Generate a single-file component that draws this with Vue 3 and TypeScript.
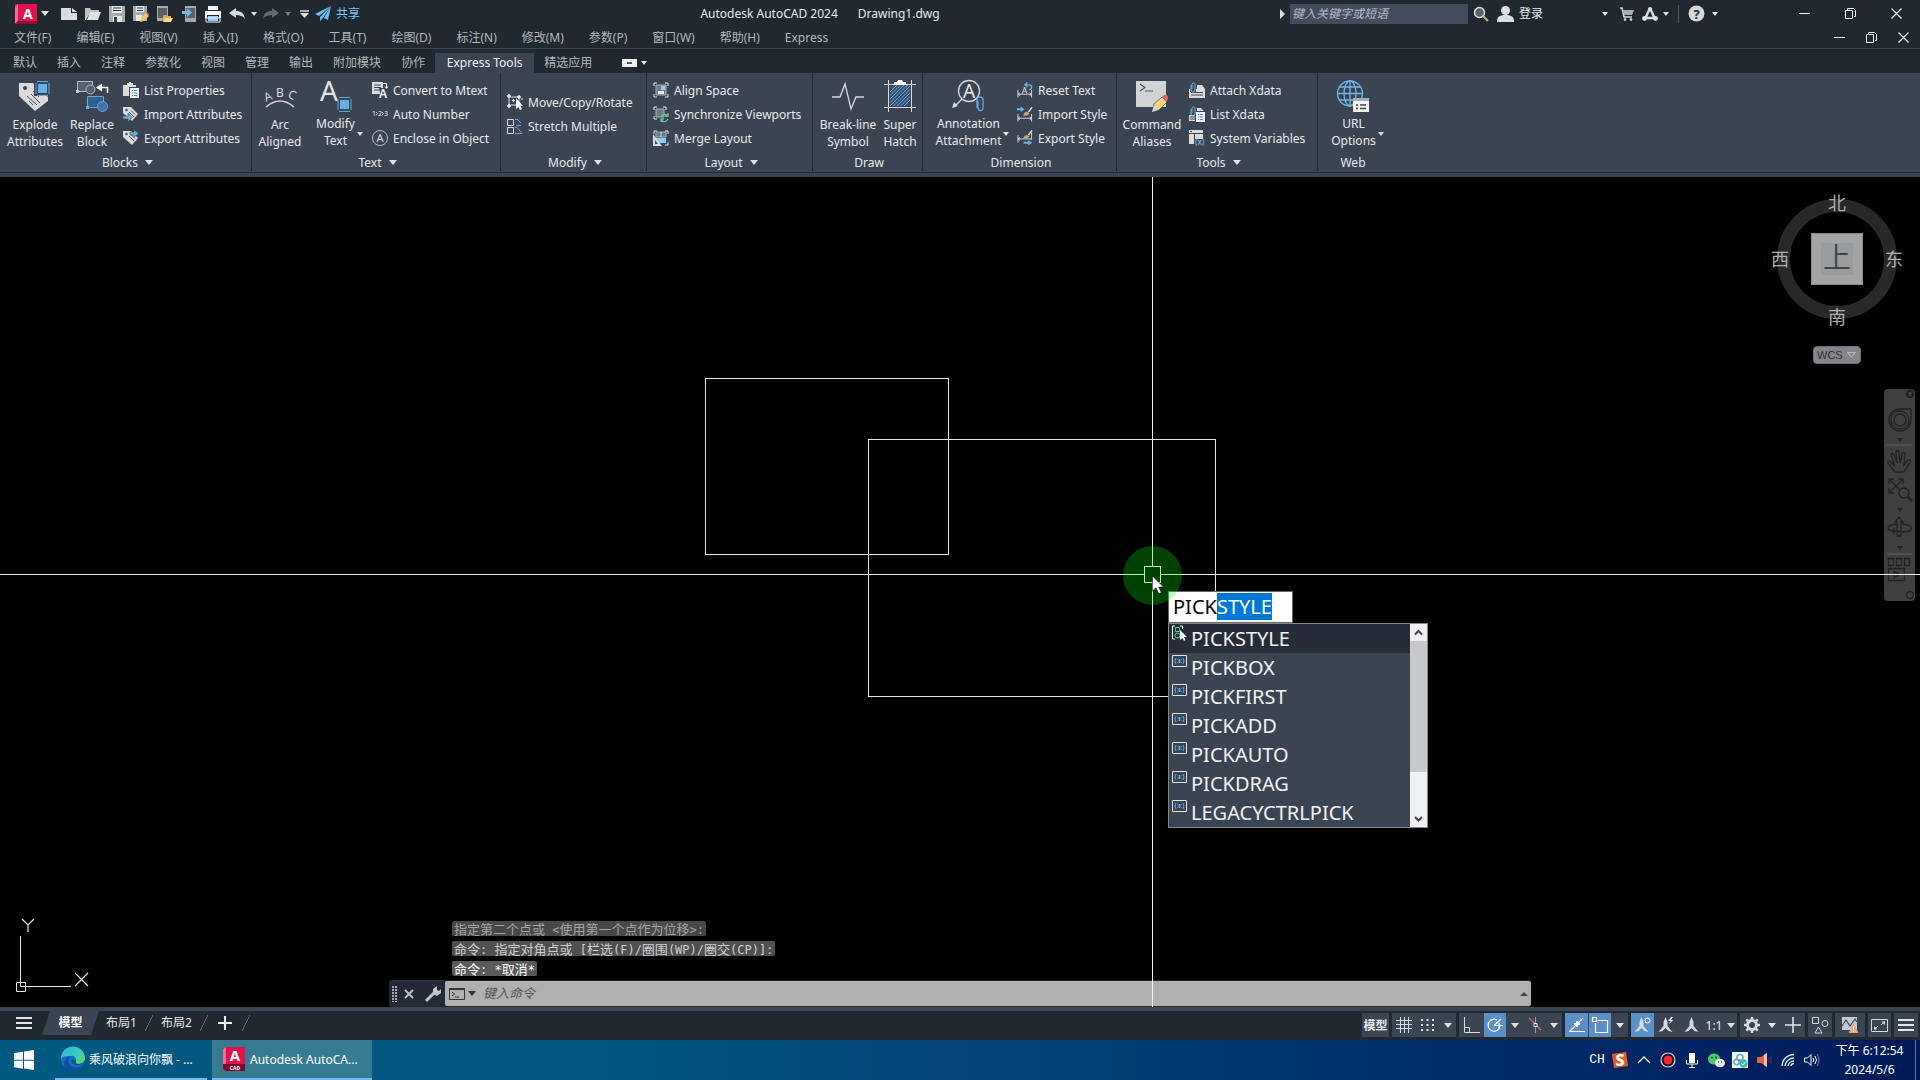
<script setup lang="ts">
import { onMounted, ref } from 'vue'

interface Icon { w: number; h: number; body: string }

const tag = '<path d="M0 1h8l7 7-6 7-9-8z" fill="#dcdcdc"/><circle cx="3.500" cy="4" r="1.200" fill="#3b4453"/><path d="M6 6l5 5M8 4.500l4 4" stroke="#3b4453"/>'
const dimension = '<path d="M1 8v8M15.500 8v8M1 12.500h14M3 11l-2 1.500 2 1.500M13.500 11l2 1.500-2 1.500" stroke="#d6d8da" fill="none"/>'
const brackets = '<path d="M1 4V1h3M12 1h3v3M15 12v3h-3M4 15H1v-3" stroke="#e4e6e8" fill="none"/>'
const clip = '<path d="M2 3v5a2 2 0 0 0 4 0V2.500a1.500 1.500 0 0 0-3 0V7" stroke="#6fb7ea" fill="none"/>'
const blueSquare = (x: number, y: number) =>
  `<g transform="translate(${x} ${y})"><path d="M3 3h9v9H3z" fill="#64b1ea"/><path d="M1 2v11M14 2v11M2 .5h11M2 14.500h11" stroke="#64a9dc" fill="none"/></g>`
const compass = '<path d="M7.500 0l2 5v4l5 6-4-1-3-3-3 3-4 1 5-6V5z" fill="#d5dae0"/>'

const icons: Record<string, Icon> = {
  logo: { w: 23, h: 20, body: '<path d="M0 0h22v19H0z" fill="#e0134f"/><path d="M0 3l3-3v17l-3 3z" fill="#f2708f"/><path d="M0 20l3-3h19v3z" fill="#8f0f33"/><text x="8" y="14.500" font-size="14" font-weight="700" fill="#fff">A</text>' },
  new: { w: 16, h: 14, body: '<path d="M0 1h10v5h6v7H0z" fill="#dcdcdc"/><path d="M11 1l5 4h-5z" fill="#dcdcdc"/>' },
  open: { w: 16, h: 14, body: '<path d="M0 1h5l1 2h8v3H5l-4 7H0z" fill="#bfc0c2"/><path d="M5 5h11l-3 8H2z" fill="#e2e2e2"/>' },
  save: { w: 16, h: 16, body: '<path d="M0 0h16v16H0z" fill="#a9abad"/><path d="M3 0h10v7H3z" fill="#e8e8e8"/><path d="M4 2h8M4 4.500h8" stroke="#333b44"/><path d="M4 10h9v6H4z" fill="#e8e8e8"/><path d="M5 11h3v5H5z" fill="#333b44"/>' },
  saveas: { w: 16, h: 16, body: '<path d="M0 0h14v15H0z" fill="#a9abad"/><path d="M3 0h8v6H3z" fill="#e8e8e8"/><path d="M4 2h6M4 4.500h6" stroke="#333b44"/><path d="M3 9h6v6H3z" fill="#e8e8e8"/><path d="M7 16l1-4 5-5 3 3-5 5z" fill="#f3c46a"/><path d="M13 7l1-1 2 2v2z" fill="#df6464"/>' },
  mobopen: { w: 16, h: 16, body: '<path d="M0 0h11v15H0z" fill="#a9a9a9"/><path d="M1 2h9v10H1z" fill="#5d6165"/><path d="M6 9h4l1 1h3v5H6z" fill="#dba74f"/><path d="M8 12h8l-2 4H6z" fill="#fbd88b"/>' },
  mobsave: { w: 16, h: 16, body: '<path d="M4 0h11v16H4z" fill="#a9a9a9"/><path d="M5 2h9v10H5z" fill="#5d6165"/><path d="M1 5h5V2l5 4.500L6 11V8H1z" fill="#6dbdf2"/>' },
  print: { w: 16, h: 16, body: '<path d="M3 0h10v4H3zM0 5h16v7h-2v-3H2v3H0z" fill="#f4f4f4"/><path d="M3 10h10v5H3z" fill="#8fcdf5"/><path d="M1 12h14v4H1z" fill="none" stroke="#f4f4f4"/>' },
  undo: { w: 16, h: 12, body: '<path d="M0 5l7-5v3c5 0 8 2 9 8-2-3-5-4-9-4v3z" fill="#d9d9d9"/>' },
  redo: { w: 16, h: 12, body: '<path d="M16 5L9 0v3c-5 0-8 2-9 8 2-3 5-4 9-4v3z" fill="#646a70"/>' },
  custom: { w: 9, h: 8, body: '<path d="M0 1h9" stroke="#e0e0e0" stroke-width="1.500"/><path d="M0 3h9L4.500 8z" fill="#e0e0e0"/>' },
  plane: { w: 16, h: 15, body: '<path d="M16 0L0 8l4 2zM16 0L5 11v4l3-3zM16 0L9 12l4 2z" fill="#6dbdf2"/>' },
  magnifier: { w: 16, h: 16, body: '<circle cx="6.500" cy="6.500" r="5" fill="#58616c" stroke="#e0e0e0" stroke-width="1.500"/><path d="M10 10l5 5" stroke="#cfb08a" stroke-width="2"/>' },
  user: { w: 17, h: 16, body: '<circle cx="8.500" cy="4.500" r="4.500" fill="#dedede"/><path d="M0 16c0-5 2-6 6-7h5c4 1 6 2 6 7z" fill="#dedede"/>' },
  cart: { w: 14, h: 14, body: '<path d="M0 1h2l2 9h8" stroke="#d8d8d8" fill="none" stroke-width="1.500"/><path d="M3 3h11l-2 5H4z" fill="#a9adb1"/><circle cx="5" cy="12.500" r="1.300" fill="#e0e0e0"/><circle cx="11" cy="12.500" r="1.300" fill="#e0e0e0"/>' },
  autodesk: { w: 16, h: 14, body: '<path d="M8 1L3 12M8 1l5 11M3 11h10" stroke="#dedede" stroke-width="2.400" fill="none"/><circle cx="8" cy="2" r="2" fill="#dedede"/><circle cx="2.500" cy="11.500" r="2.400" fill="#dedede"/><circle cx="13.500" cy="11.500" r="2.400" fill="#dedede"/>' },
  help: { w: 17, h: 17, body: '<circle cx="8.500" cy="8.500" r="8" fill="#d8d8d8"/><text x="8.500" y="13.500" font-size="13" font-weight="700" text-anchor="middle" fill="#202830">?</text>' },
  min: { w: 11, h: 11, body: '<path d="M0 5.500h11" stroke="#f2f2f2"/>' },
  restore: { w: 11, h: 11, body: '<path d="M.5 2.500h7v8h-7zM2.500 2V.5h6l2 2v6H9" stroke="#f2f2f2" fill="none"/>' },
  close: { w: 11, h: 11, body: '<path d="M.5.5l10 10M10.500.5l-10 10" stroke="#f2f2f2" stroke-width="1.200"/>' },

  explode: { w: 32, h: 32, body: `<path d="M0 3h14l15 14v4L16 31 0 16z" fill="#dadada"/><circle cx="6" cy="8" r="2" fill="#3b4453"/><path d="M8 16l10 9M12 14l9 9M10 21l4 4M14 11l6 6" stroke="#4a525f" fill="none"/><path d="M15 0h17v16H15z" fill="#3b4453"/>${blueSquare(16, 1)}` },
  replace: { w: 32, h: 32, body: '<path d="M1.500 1.500h15v10h-15z" fill="#566070" stroke="#b9bec5"/><circle cx="14.500" cy="9.500" r="4.500" fill="#566070" stroke="#b9bec5"/><path d="M0 10h3v3H0z" fill="#c9ced4"/><path d="M31.500 13V7.500H23" stroke="#fff" fill="none" stroke-width="1.500"/><path d="M20 7.500l6-4v8z" fill="#fff"/><path d="M11.500 16.500h16v11h-16z" fill="#315f8a" stroke="#64a9dc"/><circle cx="26.500" cy="26.500" r="5" fill="#3f76a8" stroke="#64a9dc"/><path d="M10 26h3v3h-3z" fill="#64b1ea"/>' },
  listprop: { w: 16, h: 16, body: '<path d="M0 3h4V1h2V0h2v1h2v2h3v2H6v9H0z" fill="#dcdcdc"/><path d="M7 6h9v10H7z" fill="#f2f2f2"/><path d="M9 8.500h1M9 11h1M9 13.500h1M11 8.500h3M11 11h3M11 13.500h3" stroke="#3f8fcf"/>' },
  importattr: { w: 16, h: 16, body: `${tag}<path d="M0 10h5V7l4 4.500L5 16v-3H0z" fill="#64b1ea" stroke="#3b4453" stroke-width=".6"/>` },
  exportattr: { w: 16, h: 16, body: `${tag}<path d="M7 2h4V0l5 3.500L11 7V5H7z" fill="#64b1ea" stroke="#3b4453" stroke-width=".6"/>` },
  arc: { w: 32, h: 32, body: '<text transform="translate(2 22) rotate(-24)" font-size="12" fill="#d6d8da">A</text><text x="12" y="17" font-size="12" fill="#d6d8da">B</text><text transform="translate(23 17) rotate(26)" font-size="12" fill="#d6d8da">C</text><path d="M2 27q14-12 28 0" stroke="#d6d8da" fill="none" stroke-width="1.400"/>' },
  modtext: { w: 32, h: 32, body: `<text x="0" y="21" font-size="28" fill="#dfe1e3">A</text>${blueSquare(17, 17)}` },
  mtext: { w: 16, h: 16, body: '<path d="M0 0h11v12H0z" fill="#dcdcdc"/><path d="M2 3h7M2 5.500h7M2 8h5" stroke="#3b4453"/><path d="M7 6h9v10H9z" fill="#3b4453"/><text x="7" y="16" font-size="12" font-weight="600" fill="#f2f2f2">A</text><path d="M11 1.500h3.500V6M13 4.500l1.500 2 1.500-2" stroke="#f2f2f2" fill="none"/>' },
  autonum: { w: 16, h: 16, body: '<text x="0" y="10" font-size="7" fill="#f2f2f2">1</text><text x="6" y="10" font-size="7" fill="#f2f2f2">2</text><text x="12" y="10" font-size="7" fill="#f2f2f2">3</text><path d="M4 6l1.500 1.500L4 9M10 6l1.500 1.500L10 9" stroke="#f2f2f2" fill="none" stroke-width=".8"/>' },
  enclose: { w: 16, h: 16, body: '<circle cx="8" cy="8" r="7.500" stroke="#b9bec5" fill="none"/><text x="8" y="12" font-size="11" text-anchor="middle" fill="#dcdcdc">A</text>' },
  movecopy: { w: 16, h: 16, body: '<path d="M2 3h10v8H2z" fill="none" stroke="#dcdcdc"/><path d="M0 2h4M0 12h4M2 0v4M2 10v4M10 3h4M12 1v4" stroke="#f2f2f2" stroke-width="1.500"/><path d="M5 6.500h3M6.500 5v3M14 5h2" stroke="#f2f2f2"/><path d="M9 4v11l2.500-2 1.500 3 2-1-1.500-3H16z" fill="#fff"/>' },
  stretch: { w: 16, h: 16, body: '<path d="M.5 1.500h6v6h-6zM.5 9.500h6v6h-6z" stroke="#dcdcdc" fill="none"/><path d="M8 1.500h3l3 4M14 7.500H9M8 9.500h2l5 6H8" stroke="#64a9dc" fill="none"/>' },
  align: { w: 16, h: 16, body: `${brackets}<path d="M3 3h10v10H3z" fill="#6f7885" stroke="#aab0b8"/><path d="M8 4h4v4H8z" fill="#8fcdf5"/><path d="M5 9h6v3H5z" fill="#eef0f2"/>` },
  sync: { w: 16, h: 16, body: '<path d="M1 4V1h3M10 1h3v3M4 13H1v-3" stroke="#e4e6e8" fill="none"/><path d="M3 3h8v8H3z" fill="#6f7885" stroke="#aab0b8"/><path d="M8 11a4 4 0 0 1 7-1M15 13a4 4 0 0 1-7 1M15 7v3h-3M8 16v-3h3" stroke="#5fd09a" fill="none" stroke-width="1.300"/>' },
  merge: { w: 16, h: 16, body: `${brackets}<path d="M3 2h10v5H3z" fill="#6f7885" stroke="#aab0b8"/><path d="M3 8h10v5H3z" fill="#8fcdf5"/><path d="M8 2v5" stroke="#dcdcdc"/><path d="M0 4l9 12H0z" fill="#dcdcdc"/><path d="M2 10l3 4H2z" fill="#3b4453"/>` },
  breakline: { w: 32, h: 32, body: '<path d="M0 17h8l5-13 6 25 5-12h8" stroke="#d6d8da" fill="none" stroke-width="1.300"/>' },
  hatch: { w: 32, h: 32, body: '<path d="M6 5h20v21H6z" fill="#35506e"/><path d="M6 12l7-7M6 19L20 5M6 26L26 6M13 26l13-13M20 26l6-6M6 15.500L16.500 5M6 22.500L23.500 5M9.500 26L26 9.500M16.500 26l9.500-9.500" stroke="#64a9dc"/><path d="M4.500 0v32M27.500 0v32M0 4.500h32M0 27.500h32" stroke="#d6d8da"/><path d="M10 2h3l1-2h4l1 2h3v3H10z" fill="#fff"/>' },
  annot: { w: 32, h: 32, body: '<circle cx="17" cy="11" r="10.500" stroke="#d6d8da" fill="none" stroke-width="1.300"/><text x="17" y="18" font-size="19" text-anchor="middle" fill="#e8eaec">A</text><path d="M10 19L2 27" stroke="#d6d8da" stroke-width="1.300"/><path d="M0 28l2-6 4 4z" fill="#d6d8da"/><path d="M26 21v7a2.500 2.500 0 0 0 5 0v-8a3 3 0 0 0-6 0v8" stroke="#64a9dc" fill="none" stroke-width="1.300"/>' },
  reset: { w: 17, h: 16, body: `${dimension}<text x="8" y="12" font-size="10" text-anchor="middle" fill="#dcdcdc">A</text><path d="M9 2.500h4a2.500 2.500 0 0 1 0 5M11 0L8.500 2.500 11 5" stroke="#6fb7ea" fill="none" stroke-width="1.400"/>` },
  impstyle: { w: 17, h: 16, body: `${dimension}<path d="M0 2h4V0l4 3-4 3V4H0z" fill="#64b1ea"/><path d="M7 10c0-4 2-4 4-4l2 1c-1 3-3 3-6 3z" fill="#c9a27a"/><path d="M12 6l4-5" stroke="#eee" stroke-width="1.500"/>` },
  expstyle: { w: 17, h: 16, body: `<path d="M1 5v8M15.500 2v8M1 9h14M3 7.500L1 9l2 1.500" stroke="#d6d8da" fill="none"/><path d="M7 9c0-4 2-4 4-4l2 1c-1 3-3 3-6 3z" fill="#c9a27a"/><path d="M12 5l4-5" stroke="#eee" stroke-width="1.500"/><path d="M7 12h5v-2l4 3-4 3v-2H7z" fill="#64b1ea"/>` },
  cmdalias: { w: 32, h: 32, body: '<path d="M0 1h30v26H0z" fill="#d2d3d4"/><path d="M4 4l5 3.500L4 11M9 11h8" stroke="#4a525f" fill="none" stroke-width="1.200"/><path d="M16 32l2-8 8-7 5 5-8 8z" fill="#f8d27c" stroke="#3b4453" stroke-width=".7"/><path d="M26 17l2-2h3l1 2v2l-2 3z" fill="#df6464"/><path d="M16 32l2-7 4 5z" fill="#d6d6d6"/>' },
  attachx: { w: 16, h: 16, body: `<path d="M0 7h16v9H0z" fill="#dcdcdc"/><path d="M8 3h5l3 4H8z" fill="#dcdcdc"/><path d="M2 10.500h12M2 13h12" stroke="#3b4453"/><path d="M1 0h6v10H1z" fill="#3b4453"/>${clip}` },
  listx: { w: 16, h: 16, body: `<path d="M0 9h6v6H0zM8 2h4l3 3H8z" fill="#dcdcdc"/><path d="M1 11h5M1 13h5" stroke="#3b4453"/>${clip}<path d="M7 6h9v10H7z" fill="#f2f2f2"/><path d="M9 8.500h1M9 11h1M9 13.500h1M11 8.500h3M11 11h3M11 13.500h3" stroke="#3f8fcf"/>` },
  sysvar: { w: 16, h: 16, body: '<path d="M0 0h14v3H0zM0 4h5v10H0zM6 4h8v5H6z" fill="#dcdcdc"/><path d="M1 1.500h2" stroke="#3b4453"/><text x="6" y="15" font-size="8" fill="#8fcdf5">(x)</text>' },
  url: { w: 32, h: 32, body: '<g stroke="#6fb7ea" fill="none" stroke-width="1.300"><circle cx="13" cy="13.500" r="12.500"/><ellipse cx="13" cy="13.500" rx="6" ry="12.500"/><path d="M13 1v25M.5 13.500h25M2 7h22M2 20h22"/></g><path d="M16 18h16v14H16z" fill="#f2f2f2"/><path d="M16 18h16v3H16z" fill="#a9adb3"/><path d="M19 25h2M19 28.500h2M23 25h6M23 28.500h6" stroke="#3b4453" stroke-width="1.500"/>' },

  cursorlist: { w: 16, h: 16, body: '<path d="M3 1H.5v13H3M8 1h2.500v3" stroke="#fff" fill="none"/><path d="M3.500 2.500h4v4h-4z" stroke="#5fd09a" fill="none"/><circle cx="5.500" cy="10.500" r="2.500" stroke="#5fd09a" fill="none"/><path d="M8 5v10l2.500-2 1.500 3 1.500-1-1.500-3h3z" fill="#fff"/>' },
  variable: { w: 16, h: 16, body: '<path d="M.5 1.500h14v11H.5z" stroke="#dfe3e8" fill="none"/><path d="M4 4q-2 3 0 6M11 4q2 3 0 6M5.500 5l4 4M9.500 5l-4 4M7.500 5v4" stroke="#64a9dc" fill="none"/>' },

  wrench: { w: 16, h: 16, body: '<path d="M1 15L9 7" stroke="#c2c6cb" stroke-width="3"/><path d="M8 3l4-3v4l2 1 2-2v4l-4 3-4-2z" fill="#c2c6cb"/>' },
  prompt: { w: 16, h: 12, body: '<path d="M.5.5h15v11H.5z" stroke="#333" fill="none"/><path d="M0 0h16v2H0z" fill="#333"/><path d="M3 4l2.500 2L3 8M6 9h4" stroke="#333" fill="none"/>' },
  x: { w: 10, h: 10, body: '<path d="M1 1l8 8M9 1L1 9" stroke="#c2c6cb" stroke-width="1.800"/>' },

  menu: { w: 16, h: 14, body: '<path d="M0 2h16M0 7h16M0 12h16" stroke="#e4e6e8" stroke-width="2"/>' },
  plus: { w: 16, h: 16, body: '<path d="M8 0v16M0 8h16" stroke="#dfe3e8" stroke-width="1.600"/>' },
  grid: { w: 16, h: 16, body: '<path d="M4.500 0v16M8.500 0v16M12.500 0v16M0 3.500h16M0 7.500h16M0 11.500h16" stroke="#d5dae0"/>' },
  dots: { w: 14, h: 14, body: '<path d="M0 2h14M0 7h14M0 12h14" stroke="#e4e6e8" stroke-width="2" stroke-dasharray="2 3.500"/>' },
  ortho: { w: 16, h: 16, body: '<path d="M.5 0v15.500H16M.5 10.500h5v5" stroke="#d5dae0" fill="none"/>' },
  polar: { w: 16, h: 16, body: '<path d="M13 9a6 6 0 1 1-3-6M7 8.500h9M7 8.500L14 2M12 6v5" stroke="#fff" fill="none" stroke-width="1.200"/>' },
  iso: { w: 14, h: 16, body: '<path d="M1 1l12 12" stroke="#e0647c" stroke-width="1.300"/><path d="M7.500 0v16" stroke="#5fbf8a"/><path d="M6 6.500h3v3H6z" stroke="#eee" fill="#3b4453"/>' },
  track: { w: 16, h: 16, body: '<path d="M0 14.500h16M1 14L14 1" stroke="#fff" fill="none" stroke-width="1.200"/><path d="M5 6h6v2H5zM7 4h2v6H7z" fill="#fff"/>' },
  osnap: { w: 16, h: 16, body: '<path d="M6 3.500h9.500v12h-12V6M.5.5h4v4h-4z" stroke="#fff" fill="none" stroke-width="1.200"/>' },
  anno1: { w: 17, h: 16, body: `${compass}<circle cx="13.500" cy="3.500" r="2.500" stroke="#fff" fill="#5a8fc8"/>` },
  anno2: { w: 17, h: 16, body: `${compass}<path d="M13 0l-3 4h2.500l-2 3.500 5-4.500H13L15 0z" fill="#d5dae0"/>` },
  anno3: { w: 15, h: 16, body: compass },
  gear: { w: 16, h: 16, body: '<circle cx="8" cy="8" r="4.500" stroke="#d5dae0" fill="none" stroke-width="3"/><path d="M8 0v3M8 13v3M0 8h3M13 8h3M2.300 2.300l2 2M11.700 11.700l2 2M2.300 13.700l2-2M11.700 4.300l2-2" stroke="#d5dae0" stroke-width="2.500"/>' },
  isolate: { w: 17, h: 17, body: '<path d="M.5.5h6v6h-6zM6.500 10l3.500 6H3z" stroke="#d5dae0" fill="none"/><circle cx="13" cy="6.500" r="3" stroke="#d5dae0" fill="none"/>' },
  perf: { w: 17, h: 17, body: '<path d="M0 0h15v13H0z" fill="#c4c8cd"/><path d="M0 9L4 3l4 6 5-7 2 3" stroke="#3b4453" fill="none" stroke-width="1.200"/><path d="M11.500 6l5 10h-10z" fill="#f0a878"/><path d="M11.500 9v4M11.500 14v1" stroke="#fff"/>' },
  clean: { w: 17, h: 13, body: '<path d="M.5.5h16v12H.5z" stroke="#d5dae0" fill="none"/><path d="M3 7v3.500h3.500zM14 6V2.500h-3.500z" fill="#d5dae0"/><path d="M3.500 10L7 7M10 6l4-3.500" stroke="#d5dae0"/>' },

  windows: { w: 20, h: 20, body: '<path d="M0 3l9-1.300v8H0zM10 1.500L20 0v9.700H10zM0 10.700h9v8L0 17.300zM10 10.700h10V20l-10-1.500z" fill="#fff"/>' },
  edge: { w: 24, h: 24, body: '<defs><linearGradient id="eg" x1="0" y1="0" x2="1" y2="1"><stop offset="0" stop-color="#2fb4e6"/><stop offset=".5" stop-color="#3bc9c4"/><stop offset="1" stop-color="#62d957"/></linearGradient></defs><circle cx="12" cy="12" r="12" fill="#1271c9"/><path d="M0 12A12 12 0 0 1 24 11c0 5-4 6-7 6-2 0-3-1-2-3 1-4-3-6-6-5C5 9 1 9 0 12z" fill="url(#eg)"/><path d="M10 9c-4 2-3 9 2 11 4 1 7 0 10-2-3 7-12 8-17 4C1 18 3 10 10 9z" fill="#0f4f9e"/><path d="M11 12c-2 4 2 8 11 5l2 1V13c-1 3-4 4-7 4-2 0-3-1-2-3z" fill="#02597f"/>' },
  cad: { w: 22, h: 24, body: '<path d="M0 2l3-2h19v17H0z" fill="#e0134f"/><path d="M0 2l3-2v17H0z" fill="#f2708f"/><path d="M0 17h22v7H3l-3-2z" fill="#7b0c2b"/><text x="12" y="14" font-size="15" font-weight="700" text-anchor="middle" fill="#fff">A</text><text x="12" y="22.500" font-size="5" font-weight="700" text-anchor="middle" fill="#fff">CAD</text>' },
  sogou: { w: 18, h: 18, body: '<path d="M1 3l14-2 2 14-14 2z" fill="#e85a24"/><text x="9" y="15" font-size="16" font-weight="800" text-anchor="middle" fill="#fff">S</text>' },
  chevron: { w: 14, h: 8, body: '<path d="M1 7l6-6 6 6" stroke="#fff" fill="none" stroke-width="1.300"/>' },
  record: { w: 16, h: 16, body: '<circle cx="8" cy="8" r="7" fill="#101018" stroke="#dcdcdc" stroke-width="1.200"/><circle cx="8" cy="8" r="4.500" fill="#f02a2a"/>' },
  mic: { w: 12, h: 16, body: '<path d="M3 1h6v10H3z" fill="#fff"/><path d="M.5 8v4h11V8M6 12v3M3 15.500h6" stroke="#fff" fill="none"/>' },
  wechat: { w: 17, h: 15, body: '<ellipse cx="6" cy="6" rx="6" ry="5.500" fill="#4fc96b"/><circle cx="4" cy="4.500" r=".9" fill="#0b4a33"/><circle cx="8" cy="4.500" r=".9" fill="#0b4a33"/><ellipse cx="12" cy="10" rx="5" ry="4.300" fill="#e6f2e9"/><circle cx="10.500" cy="9" r=".7" fill="#456"/><circle cx="13.500" cy="9" r=".7" fill="#456"/>' },
  cloud: { w: 16, h: 16, body: '<path d="M0 0h16v16H0z" fill="#f4f8fa"/><circle cx="8" cy="5.500" r="3" stroke="#5aa6dd" fill="none" stroke-width="1.500"/><circle cx="4.500" cy="10" r="2.700" stroke="#5aa6dd" fill="none" stroke-width="1.500"/><circle cx="7.500" cy="8.500" r="1.200" fill="#e0697c"/><circle cx="11.500" cy="11.500" r="4.200" fill="#35c4ae"/><path d="M9.500 11.500l1.500 1.500 2.500-3" stroke="#fff" fill="none"/>' },
  speaker: { w: 15, h: 14, body: '<path d="M0 4h4l6-4v14l-6-4H0z" fill="#e0644a"/><path d="M7 2l3-2v14l-3-2z" fill="#f7c3ae"/><path d="M12 4v6M14 3v8" stroke="#6d2340"/>' },
  network: { w: 14, h: 14, body: '<g stroke="#e8eef6" fill="none" stroke-width="1.300"><path d="M1 13A12 12 0 0 1 13 1.500M4 13a9 9 0 0 1 9-8M7 13a6 6 0 0 1 6-5M10 13a3 3 0 0 1 3-2.500"/></g>' },
  sound: { w: 16, h: 14, body: '<path d="M.5 5h3L7 1.500v11L3.500 9h-3z" stroke="#fff" fill="none"/><path d="M9 5q1.500 2 0 4M11 3q3 4 0 8" stroke="#fff" fill="none"/><path d="M13 1q4 6 0 12" stroke="#7787ad" fill="none"/>' },
}

const box = (k: string) => `0 0 ${icons[k].w} ${icons[k].h}`

const files = ['new', 'open', 'save', 'saveas', 'mobopen', 'mobsave', 'print']
const menus = ['文件(F)', '编辑(E)', '视图(V)', '插入(I)', '格式(O)', '工具(T)', '绘图(D)', '标注(N)', '修改(M)', '参数(P)', '窗口(W)', '帮助(H)', 'Express']
const tabs = ['默认', '插入', '注释', '参数化', '视图', '管理', '输出', '附加模块', '协作', 'Express Tools', '精选应用']

interface Big { icon: string; lines: string[]; width: number; drop?: boolean }
interface Panel { title: string; width: number; drop?: boolean; big: Big[]; small: [string, string][] }
const panels: Panel[] = [
  { title: 'Blocks', width: 251, drop: true,
    big: [{ icon: 'explode', lines: ['Explode', 'Attributes'], width: 62 }, { icon: 'replace', lines: ['Replace', 'Block'], width: 52 }],
    small: [['listprop', 'List Properties'], ['importattr', 'Import Attributes'], ['exportattr', 'Export Attributes']] },
  { title: 'Text', width: 249, drop: true,
    big: [{ icon: 'arc', lines: ['Arc', 'Aligned'], width: 50 }, { icon: 'modtext', lines: ['Modify', 'Text'], width: 62, drop: true }],
    small: [['mtext', 'Convert to Mtext'], ['autonum', 'Auto Number'], ['enclose', 'Enclose in Object']] },
  { title: 'Modify', width: 146, drop: true, big: [],
    small: [['movecopy', 'Move/Copy/Rotate'], ['stretch', 'Stretch Multiple']] },
  { title: 'Layout', width: 166, drop: true, big: [],
    small: [['align', 'Align Space'], ['sync', 'Synchronize Viewports'], ['merge', 'Merge Layout']] },
  { title: 'Draw', width: 110,
    big: [{ icon: 'breakline', lines: ['Break-line', 'Symbol'], width: 64 }, { icon: 'hatch', lines: ['Super', 'Hatch'], width: 40 }], small: [] },
  { title: 'Dimension', width: 194,
    big: [{ icon: 'annot', lines: ['Annotation', 'Attachment'], width: 86, drop: true }],
    small: [['reset', 'Reset Text'], ['impstyle', 'Import Style'], ['expstyle', 'Export Style']] },
  { title: 'Tools', width: 201, drop: true,
    big: [{ icon: 'cmdalias', lines: ['Command', 'Aliases'], width: 64 }],
    small: [['attachx', 'Attach Xdata'], ['listx', 'List Xdata'], ['sysvar', 'System Variables']] },
  { title: 'Web', width: 67,
    big: [{ icon: 'url', lines: ['URL', 'Options'], width: 66, drop: true }], small: [] },
]

const suggestions = ['PICKSTYLE', 'PICKBOX', 'PICKFIRST', 'PICKADD', 'PICKAUTO', 'PICKDRAG', 'LEGACYCTRLPICK']

const history = ['指定第二个点或 <使用第一个点作为位移>:', '命令: 指定对角点或 [栏选(F)/圈围(WP)/圈交(CP)]:', '命令: *取消*']
const runs = (line: string) => line.match(/[\x00-\x7f]+|[^\x00-\x7f]+/g) ?? []
const isLatin = (run: string) => run.charCodeAt(0) < 128

interface Cell { icon?: string; text?: string; width: number; on?: boolean }
const drop = (width: number): Cell => ({ width })
const status: Cell[][] = [
  [{ text: '模型', width: 27 }],
  [{ icon: 'grid', width: 24 }, { icon: 'dots', width: 24 }, drop(16)],
  [{ icon: 'ortho', width: 25 }, { icon: 'polar', width: 22, on: true }, drop(18), { icon: 'iso', width: 22 }, drop(16)],
  [{ icon: 'track', width: 23, on: true }, { icon: 'osnap', width: 23, on: true }, drop(17)],
  [{ icon: 'anno1', width: 23, on: true }, { icon: 'anno2', width: 25 }, { icon: 'anno3', width: 24 }, { text: '1:1', width: 22 }, drop(12)],
  [{ icon: 'gear', width: 24 }, drop(16), { icon: 'plus', width: 25 }],
  [{ icon: 'isolate', width: 24 }],
  [{ icon: 'perf', width: 30 }],
  [{ icon: 'clean', width: 23 }],
  [{ icon: 'menu', width: 24 }],
]
const tray = ['sogou', 'chevron', 'record', 'mic', 'wechat', 'cloud', 'speaker', 'network', 'sound']

const command = ref('PICKSTYLE')
const entry = ref<HTMLInputElement | null>(null)
onMounted(() => {
  entry.value?.focus()
  entry.value?.setSelectionRange(4, 9)
})
</script>

<template>
  <div class="app">
    <header class="titlebar">
      <div class="quick">
        <button class="ib" aria-label="AutoCAD"><svg width="23" height="20" :viewBox="box('logo')" v-html="icons.logo.body" /></button>
        <button class="ib first-drop" aria-label="Application menu"><i class="tri" /></button>
        <button v-for="f in files" :key="f" class="ib q" :aria-label="f">
          <svg :width="icons[f].w" :height="icons[f].h" :viewBox="box(f)" v-html="icons[f].body" />
        </button>
        <button class="ib q" aria-label="undo"><svg width="16" height="12" :viewBox="box('undo')" v-html="icons.undo.body" /></button>
        <button class="ib d" aria-label="undo list"><i class="tri sm" /></button>
        <button class="ib q" aria-label="redo"><svg width="16" height="12" :viewBox="box('redo')" v-html="icons.redo.body" /></button>
        <button class="ib d" aria-label="redo list"><i class="tri sm dim" /></button>
        <button class="ib c" aria-label="customize"><svg width="9" height="8" :viewBox="box('custom')" v-html="icons.custom.body" /></button>
        <button class="ib share"><svg width="16" height="15" :viewBox="box('plane')" v-html="icons.plane.body" />共享</button>
      </div>
      <h1 class="title"><span>Autodesk AutoCAD 2024</span><span>Drawing1.dwg</span></h1>
      <div class="account">
        <i class="tri-right" />
        <input class="search" type="search" placeholder="键入关键字或短语" aria-label="键入关键字或短语" />
        <button class="ib" aria-label="search"><svg width="16" height="16" :viewBox="box('magnifier')" v-html="icons.magnifier.body" /></button>
        <button class="ib login"><svg width="17" height="16" :viewBox="box('user')" v-html="icons.user.body" />登录<i class="tri sm" /></button>
        <button class="ib cart" aria-label="cart"><svg width="14" height="14" :viewBox="box('cart')" v-html="icons.cart.body" /></button>
        <button class="ib adsk" aria-label="Autodesk"><svg width="16" height="14" :viewBox="box('autodesk')" v-html="icons.autodesk.body" /><i class="tri sm" /></button>
        <button class="ib help" aria-label="help"><svg width="17" height="17" :viewBox="box('help')" v-html="icons.help.body" /><i class="tri sm" /></button>
        <div class="win">
          <button v-for="b in ['min', 'restore', 'close']" :key="b" class="ib" :aria-label="b"><svg width="11" height="11" :viewBox="box(b)" v-html="icons[b].body" /></button>
        </div>
      </div>
    </header>

    <nav class="menubar">
      <button v-for="m in menus" :key="m">{{ m }}</button>
      <div class="docwin">
        <button v-for="b in ['min', 'restore', 'close']" :key="b" class="ib" :aria-label="b"><svg width="11" height="11" :viewBox="box(b)" v-html="icons[b].body" /></button>
      </div>
    </nav>

    <nav class="tabs">
      <button v-for="t in tabs" :key="t" :class="{ active: t === 'Express Tools' }">{{ t }}</button>
      <div class="collapse"><i class="chip" /><i class="tri sm" /></div>
    </nav>

    <section class="ribbon">
      <div v-for="p in panels" :key="p.title" class="panel" :style="{ width: p.width + 'px' }">
        <div class="tools" :class="{ pair: p.small.length === 2 }">
          <button v-for="b in p.big" :key="b.icon" class="big" :class="{ split: b.drop }" :style="{ width: b.width + 'px' }">
            <span class="col">
              <svg width="32" height="32" :viewBox="box(b.icon)" v-html="icons[b.icon].body" />
              <span v-for="l in b.lines" :key="l">{{ l }}</span>
            </span>
            <i v-if="b.drop" class="tri sm" />
          </button>
          <div v-if="p.small.length" class="smalls" :class="{ alone: !p.big.length }">
            <button v-for="[k, label] in p.small" :key="k" class="small">
              <svg width="16" height="16" :viewBox="box(k)" v-html="icons[k].body" />{{ label }}
            </button>
          </div>
        </div>
        <div class="ptitle">{{ p.title }}<i v-if="p.drop" class="tri" /></div>
      </div>
    </section>

    <main class="canvas">
      <svg class="drawing" width="100%" height="100%">
        <g fill="none" stroke="#e6e6e6">
          <rect x="705.500" y="201.500" width="243" height="176" />
          <rect x="868.500" y="262.500" width="347" height="257" />
          <path d="M20.500 759v50.500H71M16.500 805.500h9v9h-9z" />
        </g>
        <path d="M22 742l6 6 6-6M28 748v7M75 796l13 13M88 796l-13 13" stroke="#e6e6e6" fill="none" stroke-width="1.200" />
      </svg>

      <div class="cube">
        <span class="n">北</span>
        <span class="w">西</span>
        <span class="face"><b>上</b></span>
        <span class="e">东</span>
        <span class="s">南</span>
        <i class="ring" />
      </div>
      <button class="wcs">WCS<svg width="9" height="6" viewBox="0 0 9 6"><path d="M.5.5h8l-4 4.500z" fill="none" stroke="#b8b8be" /></svg></button>

      <aside class="navbar">
        <svg width="31" height="212" viewBox="0 0 31 212" fill="none" stroke="#222" stroke-width="1.300">
          <circle cx="26" cy="5" r="3.500" fill="#222" /><path d="M24.500 3.500l3 3M27.500 3.500l-3 3" stroke="#555" />
          <path d="M5 31a11 11 0 0 1 11-11h11v11a11 11 0 0 1-22 0z" /><circle cx="16" cy="31" r="9" /><circle cx="16" cy="31" r="6" />
          <path d="M3 56h25M3 165h25" stroke="#555" />
          <path d="M13 49h6l-3 4zM13 119h6l-3 4zM13 157h6l-3 4z" fill="#222" stroke="none" />
          <path d="M11 83l-7-9c-1-2 1-3 3-1l4 4-4-11c0-2 2-2 3 0l3 8-1-11c0-2 3-2 3 0l1 11 2-9c1-2 3-2 3 0l-1 11 4-5c1-1 3 0 2 2l-6 10z" />
          <path d="M5 90l17 17M19 90L5 104M5 95v-5h5M14 90h5v5M5 99v5h5" /><circle cx="20" cy="104" r="5" fill="#404040" /><path d="M24 108l4 4" stroke-width="2.500" />
          <path d="M13 147v-14h-2l4-5 4 5h-2v14zM13 135c-12 1-12 7 0 7M18 135c13 1 12 8 0 8l-8-1M11 139l-3 3 3 3" />
          <path d="M4.500 169.500h5v7h-5zM12.500 169.500h5v7h-5zM20.500 169.500h5v7h-5zM4.500 179.500h16v12h-16zM10 182v7l5-3.500z" />
          <circle cx="26" cy="206" r="3.500" />
        </svg>
      </aside>

      <div class="console">
        <p v-for="(line, i) in history" :key="i" :class="'h' + i">
          <template v-for="(r, j) in runs(line)" :key="j"><span :class="{ latin: isLatin(r) }">{{ r }}</span></template>
        </p>
        <div class="cmdbar">
          <i class="grip" />
          <button class="ib" aria-label="close"><svg width="10" height="10" :viewBox="box('x')" v-html="icons.x.body" /></button>
          <button class="ib" aria-label="settings"><svg width="16" height="16" :viewBox="box('wrench')" v-html="icons.wrench.body" /></button>
          <label class="field">
            <svg width="16" height="12" :viewBox="box('prompt')" v-html="icons.prompt.body" /><i class="tri dark" />
            <input type="text" placeholder="键入命令" aria-label="键入命令" />
            <i class="tri up" />
          </label>
        </div>
      </div>

      <i class="cross-h" /><i class="cross-v" /><i class="pickbox" />

      <div class="dynamic">
        <input ref="entry" v-model="command" class="entry" type="text" aria-label="command" />
        <div class="list">
          <ul>
            <li v-for="(s, i) in suggestions" :key="s" :class="{ sel: i === 0 }">
              <svg width="16" height="16" viewBox="0 0 16 16" v-html="icons[i ? 'variable' : 'cursorlist'].body" />{{ s }}
            </li>
          </ul>
          <div class="scroll">
            <svg width="17" height="17" viewBox="0 0 17 17"><path d="M5 10.500L8.500 7l3.500 3.500" fill="none" stroke="#444" stroke-width="2" /></svg>
            <i class="thumb" />
            <svg width="17" height="17" viewBox="0 0 17 17"><path d="M5 7l3.500 3.500L12 7" fill="none" stroke="#444" stroke-width="2" /></svg>
          </div>
        </div>
      </div>
      <i class="halo" />
      <svg class="pointer" width="12" height="19" viewBox="0 0 12 19"><path d="M.5 0v15l3.500-3.200 2.700 6 2.600-1.200-2.600-5.600h4.800z" fill="#fff" stroke="#111" stroke-width=".6" /></svg>
    </main>

    <footer class="statusbar">
      <button class="ib ham" aria-label="layouts"><svg width="16" height="14" :viewBox="box('menu')" v-html="icons.menu.body" /></button>
      <button class="layout on">模型</button>
      <button class="layout">布局1</button><i class="slash" />
      <button class="layout">布局2</button><i class="slash" />
      <button class="ib add" aria-label="new layout"><svg width="14" height="14" viewBox="0 0 16 16"><path d="M8 0v16M0 8h16" stroke="#f0f0f0" stroke-width="2.400" /></svg></button><i class="slash" />
      <div class="modes">
        <div v-for="(g, gi) in status" :key="gi" class="group">
          <button v-for="(c, ci) in g" :key="ci" :class="{ on: c.on, strong: c.text === '模型' }" :style="{ width: c.width + 'px' }" :aria-label="c.icon ?? c.text ?? 'more'">
            <svg v-if="c.icon" :width="icons[c.icon].w" :height="icons[c.icon].h" :viewBox="box(c.icon)" v-html="icons[c.icon].body" />
            <template v-else-if="c.text">{{ c.text }}</template>
            <i v-else class="tri" />
          </button>
        </div>
      </div>
    </footer>

    <footer class="taskbar">
      <button class="ib start" aria-label="start"><svg width="20" height="20" :viewBox="box('windows')" v-html="icons.windows.body" /></button>
      <button class="task"><svg width="24" height="24" :viewBox="box('edge')" v-html="icons.edge.body" />乘风破浪向你飘 - ...</button>
      <button class="task current"><svg width="22" height="24" :viewBox="box('cad')" v-html="icons.cad.body" />Autodesk AutoCA...</button>
      <div class="tray">
        <span class="ime">CH</span>
        <button v-for="t in tray" :key="t" class="ib" :aria-label="t"><svg :width="icons[t].w" :height="icons[t].h" :viewBox="box(t)" v-html="icons[t].body" /></button>
        <time class="clock"><span>下午 6:12:54</span><span>2024/5/6</span></time>
        <i class="peek" />
      </div>
    </footer>
  </div>
</template>

<style>
body { background: #000; }
</style>

<style scoped>
.app {
  display: flex;
  flex-direction: column;
  height: 100vh;
  overflow: hidden;
  background: #202830;
  color: #e8eaec;
  font: 12px/17px "Noto Sans", "Noto Sans CJK SC", sans-serif;
}
* { box-sizing: border-box; }
svg { display: block; flex: none; overflow: visible; }
i { flex: none; font-style: normal; }
button { padding: 0; border: 0; background: none; color: inherit; font: inherit; white-space: nowrap; }
.ib { display: flex; align-items: center; justify-content: center; flex: none; }

.tri { display: block; border: 4px solid transparent; border-top: 5px solid #e0e3e6; border-bottom: 0; }
.tri.sm { border-width: 4px 3px 0; }
.tri.dim { border-top-color: #777d84; }
.tri.dark { border-top-color: #333; }
.tri.up { border: 4px solid transparent; border-top: 0; border-bottom-color: #444; }
.tri-right { border: 5px solid transparent; border-left-color: #e0e3e6; border-right: 0; }

.titlebar { display: flex; align-items: center; flex: none; height: 27px; }
.quick { display: flex; align-items: center; padding-left: 15px; }
.first-drop { width: 14px; margin-right: 5px; }
.q { width: 24px; height: 24px; }
.d { width: 10px; height: 24px; }
.c { width: 22px; height: 24px; }
.share { gap: 5px; color: #7cc4f4; }
.title { display: flex; flex: 1; justify-content: center; gap: 20px; margin: 0; font-size: 12px; font-weight: 400; white-space: nowrap; }
.account { display: flex; align-items: center; flex: none; }
.search { width: 178px; height: 20px; margin: 0 5px; padding: 0 2px; border: 0; border-radius: 0; background: #434c5e; color: #fff; font: italic 12px/20px "Noto Sans", "Noto Sans CJK SC", sans-serif; }
.search::placeholder { color: #b6bcc6; opacity: 1; }
.login { gap: 5px; margin-left: 8px; }
.login .tri { margin-left: 54px; }
.cart { margin-left: 12px; }
.adsk { gap: 5px; margin-left: 8px; padding-right: 9px; border-right: 1px solid #4a525c; height: 18px; }
.help { gap: 7px; margin-left: 9px; }
.win { display: flex; gap: 35px; margin: 0 18px 0 81px; }

.menubar { display: flex; flex: none; height: 22px; padding-left: 2px; border-bottom: 1px solid #3f4853; color: #b4b8bc; }
.menubar > button { padding: 0 13px 0 12px; line-height: 22px; }
.docwin { display: flex; gap: 21px; margin: 0 11px 0 auto; align-items: center; }

.tabs { display: flex; flex: none; height: 24px; padding: 4px 0 0 3px; color: #b4b8bc; }
.tabs > button { padding: 0 10px; line-height: 20px; }
.tabs > .active { width: 99px; background: #3b4453; color: #f2f3f4; }
.collapse { display: flex; align-items: center; gap: 4px; margin-left: 20px; }
.chip { width: 15px; height: 8px; background: linear-gradient(#555, #555) 5px 3px / 5px 2px no-repeat #f2f2f2; }

.ribbon { display: flex; flex: none; height: 104px; padding-left: 1px; background: linear-gradient(#1f2938, #1f2938) 0 99px / 100% 1px no-repeat #3b4453; }
.panel { display: flex; flex-direction: column; flex: none; height: 98px; padding-left: 3px; border-right: 1px solid #1f2938; }
.panel:last-child { border: 0; }
.tools { display: flex; flex: 1; min-height: 0; padding-top: 7px; }
.tools.pair { padding-top: 19px; }
.big { display: flex; align-items: flex-start; justify-content: center; flex: none; line-height: 17px; }
.big .col { display: flex; flex-direction: column; align-items: center; min-width: 32px; }
.big .col svg { margin-bottom: 4px; }
.big.split { padding-left: 7px; }
.big.split .col svg { margin-bottom: 3px; }
.big .tri { margin: 52px 0 0 2px; }
.smalls { display: flex; flex-direction: column; margin: -2px 0 0 5px; }
.smalls.alone { margin-left: 3px; }
.small { display: flex; align-items: center; gap: 5px; height: 24px; }
.ptitle { display: flex; align-items: center; justify-content: center; gap: 7px; height: 18px; }

.canvas { position: relative; flex: 1; min-height: 0; background: #000; }
.drawing { position: absolute; inset: 0; }
.cross-h { position: absolute; left: 0; right: 0; top: 397px; height: 1px; background: #f0f0f0; }
.cross-v { position: absolute; top: 0; bottom: 0; left: 1152px; width: 1px; background: #f0f0f0; }
.pickbox { position: absolute; left: 1144px; top: 389px; width: 17px; height: 17px; border: 1px solid #f0f0f0; background: #000; }
.halo { position: absolute; left: 1123px; top: 369px; width: 59px; height: 59px; border-radius: 50%; background: rgba(0, 255, 0, .26); pointer-events: none; }
.pointer { position: absolute; left: 1152px; top: 399px; }

.cube { position: absolute; right: 17px; top: 16px; display: grid; grid-template: 30px 72px 32px / 38px 56px 38px; place-items: center; color: #b0b0b0; font-size: 18px; line-height: 20px; }
.cube span { z-index: 1; }
.n { grid-area: 1 / 2; align-self: start; }
.w { grid-area: 2 / 1; justify-self: start; }
.face { grid-area: 2 / 2; display: grid; place-items: center; width: 52px; height: 52px; border: 1px solid #8a8a8a; background: #a4a4a4; }
.face b { width: 32px; height: 32px; background: #999c9f; color: #444; font: 28px/32px "Liberation Serif", "Noto Sans CJK SC", serif; text-align: center; }
.e { grid-area: 2 / 3; justify-self: end; }
.s { grid-area: 3 / 2; align-self: end; }
.ring { position: absolute; top: 6px; left: 6px; width: 120px; height: 120px; border: 13px solid #292929; border-radius: 50%; }
.wcs { position: absolute; right: 59px; top: 169px; display: flex; align-items: center; justify-content: space-between; width: 48px; height: 18px; padding: 0 4px 0 3px; border: 1px solid #6d6d73; border-radius: 4px; background: #85858c; color: #333; font: 11px/14px "Liberation Sans", sans-serif; }
.navbar { position: absolute; right: 5px; top: 212px; border-radius: 4px; background: #404040; }

.dynamic { position: absolute; left: 1168px; top: 414px; font-size: 20px; }
.entry { display: block; width: 125px; height: 32px; padding: 0 4px 2px; border: 1px solid #666; outline: 0; background: #fff; color: #000; font: 20px/27px "Noto Sans", sans-serif; }
.entry::selection { background: #0078d7; color: #fff; }
.list { display: flex; width: 260px; border: 1px solid #85878a; background: #3b4453; }
.list ul { flex: 1; margin: 0; padding: 0; list-style: none; }
.list li { display: flex; gap: 3px; height: 29px; padding-left: 3px; line-height: 29px; color: #f2f3f4; }
.list li svg { margin-top: 1px; }
.list .sel { background: #262d38; }
.scroll { display: flex; flex-direction: column; width: 17px; background: #f0f0f0; }
.thumb { height: 131px; margin-bottom: auto; background: #c9c9c9; }

.console { position: absolute; left: 389px; bottom: 0; width: 1142px; }
.console p { width: fit-content; height: 15px; margin: 0 0 5px 63px; padding: 0 2px; border-radius: 2px; background: #484848; color: #a4a4a4; font: 13px/15px "Noto Sans CJK SC", sans-serif; white-space: pre; }
.console .h1 { background: #505050; color: #cfcfcf; }
.console .h2 { margin-bottom: 4px; background: #5a5a5a; color: #fafafa; }
.latin { font: 12px/15px "DejaVu Sans Mono", monospace; }
.cmdbar { display: flex; align-items: center; height: 27px; padding-left: 3px; border-radius: 3px; background: #222937; }
.cmdbar .ib { width: 24px; height: 24px; }
.grip { width: 5px; height: 17px; background: repeating-linear-gradient(#222937 0 1px, transparent 1px 3px), repeating-linear-gradient(90deg, #aaa 0 2px, transparent 2px 3px); }
.field { display: flex; align-items: center; flex: 1; gap: 3px; height: 25px; padding: 0 3px 0 4px; border-radius: 2px; background: #b0b0b0; }
.field input { flex: 1; margin-left: 4px; padding: 0 0 2px; border: 0; outline: 0; background: none; color: #222; font: italic 13px/20px "Noto Sans CJK SC", sans-serif; }
.field input::placeholder { color: #555; opacity: 1; }

.statusbar { display: flex; flex: none; height: 33px; border-top: 4px solid #3b4453; background: #202830; }
.ham { width: 16px; height: 24px; margin: 0 10px 0 16px; }
.layout { height: 24px; padding: 0 8px; line-height: 24px; }
.layout.on { width: 57px; margin-right: -1px; padding: 0; background: #3b4453; color: #fff; font-weight: 700; clip-path: polygon(8px 0, 100% 0, 49px 100%, 0 100%); }
.slash { width: 8px; height: 16px; margin-top: 4px; background: linear-gradient(to bottom right, transparent 47%, #5c646e 47% 53%, transparent 53%); }
.add { width: 34px; height: 24px; }
.modes { display: flex; gap: 3px; margin: 2px 2px 0 auto; }
.group { display: flex; height: 24px; background: #3b4453; }
.group button { display: flex; align-items: center; justify-content: center; }
.group .on { background: #5a8fc8; }
.group .on + .on { border-left: 1px solid #3b4453; }
.strong { font-weight: 700; }

.taskbar { display: flex; flex: none; height: 40px; background: linear-gradient(90deg, #02597f, #025680 30%, #013c74 60%, #002868 82%, #001a58); }
.start { width: 48px; margin-right: 7px; }
.task { display: flex; align-items: center; gap: 4px; width: 152px; height: 40px; margin-right: 5px; padding-left: 6px; border-bottom: 2px solid #76b9ed; color: #fff; }
.task.current { gap: 5px; width: 160px; padding-left: 11px; background: #377b93; }
.tray { display: flex; align-items: center; margin-left: auto; color: #fff; }
.ime { width: 22px; text-align: center; font: 13px/16px "Liberation Mono", monospace; }
.tray .ib { width: 24px; height: 24px; }
.clock { display: flex; flex-direction: column; align-items: center; width: 91px; line-height: 19px; }
.peek { width: 5px; height: 40px; border-left: 1px solid #6a7899; }
</style>
